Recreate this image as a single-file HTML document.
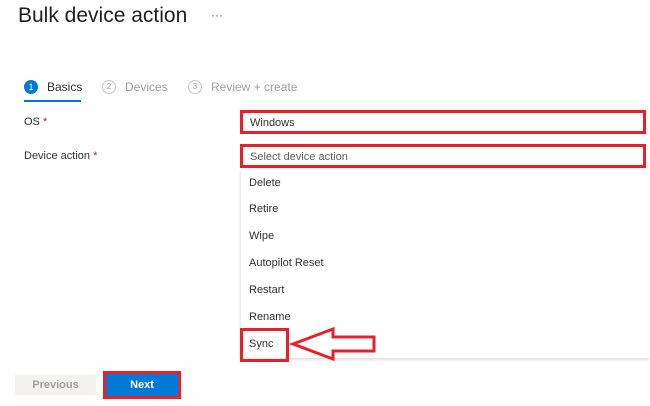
<!DOCTYPE html>
<html><head><style>
body{margin:0;width:650px;height:406px;background:#fff;font-family:"Liberation Sans",sans-serif;position:relative;overflow:hidden;color:#323130}
.a{position:absolute}
.item{position:absolute;left:249px;font-size:11px;color:#323130}
</style></head><body>
<div class="a" style="left:18px;top:4px;font-size:21px;color:#201f1e">Bulk device action</div>
<div class="a" style="left:211px;top:8px;font-size:12px;color:#605e5c">···</div>

<div class="a" style="left:24px;top:80px;width:14px;height:14px;border-radius:50%;background:#0078d4;color:#fff;font-size:9px;text-align:center;line-height:14px">1</div>
<div class="a" style="left:47px;top:80px;font-size:12px;color:#323130">Basics</div>
<div class="a" style="left:24px;top:100px;width:57px;height:2px;background:#0078d4"></div>
<div class="a" style="left:102px;top:80px;width:12px;height:12px;border-radius:50%;border:1px solid #c8c6c4;color:#a19f9d;font-size:8px;text-align:center;line-height:12px">2</div>
<div class="a" style="left:125px;top:80px;font-size:12px;color:#a19f9d">Devices</div>
<div class="a" style="left:188px;top:80px;width:12px;height:12px;border-radius:50%;border:1px solid #c8c6c4;color:#a19f9d;font-size:8px;text-align:center;line-height:12px">3</div>
<div class="a" style="left:211px;top:80px;font-size:12px;color:#a19f9d">Review + create</div>

<div class="a" style="left:24px;top:116px;font-size:11px">OS <span style="color:#a4262c">*</span></div>
<div class="a" style="left:24px;top:150px;font-size:11px">Device action <span style="color:#a4262c">*</span></div>

<div class="a" style="left:240px;top:110px;width:400px;height:18px;border:3px solid #e3222b;background:#fff"></div>
<div class="a" style="left:250px;top:117px;font-size:11px">Windows</div>
<div class="a" style="left:240px;top:144px;width:400px;height:18px;border:3px solid #e3222b;background:#fff"></div>
<div class="a" style="left:250px;top:151px;font-size:11px;color:#605e5c">Select device action</div>

<div class="a" style="left:241px;top:170px;width:409px;height:188px;background:#fff;box-shadow:0 1px 4px rgba(0,0,0,.18)"></div>
<div class="item" style="top:177px">Delete</div>
<div class="item" style="top:203px">Retire</div>
<div class="item" style="top:230px">Wipe</div>
<div class="item" style="top:257px">Autopilot Reset</div>
<div class="item" style="top:284px">Restart</div>
<div class="item" style="top:311px">Rename</div>
<div class="item" style="top:338px">Sync</div>
<div class="a" style="left:240px;top:328px;width:43px;height:28px;border:3px solid #e3222b"></div>

<svg class="a" style="left:285px;top:322px" width="96" height="44">
<polygon points="8,22 48,7 48,15 89,15 89,29 48,29 48,37" fill="#fff" stroke="#e3222b" stroke-width="3" stroke-linejoin="miter"/>
</svg>

<div class="a" style="left:15px;top:375px;width:81px;height:20px;background:#f3f2f1;color:#a19f9d;font-size:11px;font-weight:bold;text-align:center;line-height:20px">Previous</div>
<div class="a" style="left:103px;top:371px;width:72px;height:22px;border:3px solid #e3222b;background:#0078d4;color:#fff;font-size:11px;font-weight:bold;text-align:center;line-height:22px">Next</div>
</body></html>
